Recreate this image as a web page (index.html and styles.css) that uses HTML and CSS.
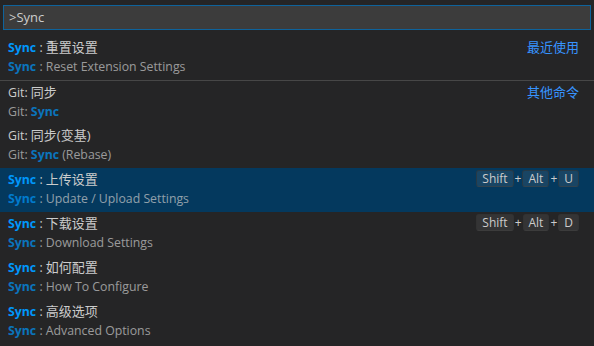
FILE: index.html
```html
<!DOCTYPE html>
<html lang="zh-CN">
<head>
    <meta charset="UTF-8">
    <title>Command Palette</title>
    <link rel="stylesheet" href="styles.css">
</head>
<body>
    <div class="quick-input">
        <div class="input-box">&gt;Sync</div>
        <div class="list">
            <div class="row">
                <div class="line">
                    <span class="label"><b class="hl">Sync</b> : <span class="zh">重置设置</span></span>
                    <span class="group">最近使用</span>
                </div>
                <div class="detail"><b class="hl">Sync</b> : Reset Extension Settings</div>
            </div>
            <div class="row sep">
                <div class="line">
                    <span class="label">Git: <span class="zh">同步</span></span>
                    <span class="group">其他命令</span>
                </div>
                <div class="detail">Git: <b class="hl">Sync</b></div>
            </div>
            <div class="row">
                <div class="line">
                    <span class="label">Git: <span class="zh">同步(变基)</span></span>
                </div>
                <div class="detail">Git: <b class="hl">Sync</b> (Rebase)</div>
            </div>
            <div class="row selected">
                <div class="line">
                    <span class="label"><b class="hl">Sync</b> : <span class="zh">上传设置</span></span>
                    <span class="keys"><kbd>Shift</kbd>+<kbd>Alt</kbd>+<kbd>U</kbd></span>
                </div>
                <div class="detail"><b class="hl">Sync</b> : Update / Upload Settings</div>
            </div>
            <div class="row">
                <div class="line">
                    <span class="label"><b class="hl">Sync</b> : <span class="zh">下载设置</span></span>
                    <span class="keys"><kbd>Shift</kbd>+<kbd>Alt</kbd>+<kbd>D</kbd></span>
                </div>
                <div class="detail"><b class="hl">Sync</b> : Download Settings</div>
            </div>
            <div class="row">
                <div class="line">
                    <span class="label"><b class="hl">Sync</b> : <span class="zh">如何配置</span></span>
                </div>
                <div class="detail"><b class="hl">Sync</b> : How To Configure</div>
            </div>
            <div class="row">
                <div class="line">
                    <span class="label"><b class="hl">Sync</b> : <span class="zh">高级选项</span></span>
                </div>
                <div class="detail"><b class="hl">Sync</b> : Advanced Options</div>
            </div>
        </div>
    </div>
</body>
</html>
```

FILE: styles.css
```css
* {
    box-sizing: border-box;
    margin: 0;
    padding: 0;
}

body {
    background-color: #252526;
    font-family: 'Open Sans', 'Noto Sans CJK SC', sans-serif;
    font-size: 12.3px;
    color: #cccccc;
    width: 594px;
    height: 346px;
    overflow: hidden;
}

.quick-input {
    padding-top: 5px;
}

.input-box {
    margin: 0 3px;
    height: 25px;
    background-color: #3c3c3c;
    border: 1px solid #0e639c;
    padding-left: 5px;
    line-height: 23px;
    font-size: 13px;
    color: #cccccc;
}

.list {
    margin-top: 6px;
}

.row {
    height: 44px;
    padding: 0 15px 0 8px;
}

.row.sep {
    border-top: 1px solid #474747;
}

.row.selected {
    background-color: #04395e;
}

.line {
    display: flex;
    justify-content: space-between;
    align-items: center;
    height: 21px;
}

.zh {
    font-size: 13px;
}

.detail {
    height: 20px;
    line-height: 20px;
    opacity: 0.7;
}

.hl {
    color: #0097fb;
    font-weight: bold;
}

.group {
    color: #3794ff;
    font-size: 13px;
}

.keys {
    display: flex;
    align-items: center;
    gap: 1px;
    font-size: 12px;
}

kbd {
    font-family: 'Open Sans', sans-serif;
    font-size: 12px;
    background-color: rgba(128, 128, 128, 0.17);
    border: 1px solid rgba(51, 51, 51, 0.6);
    border-bottom-color: rgba(68, 68, 68, 0.6);
    border-radius: 3px;
    padding: 0 5px;
    line-height: 15px;
    color: #cccccc;
}
```
